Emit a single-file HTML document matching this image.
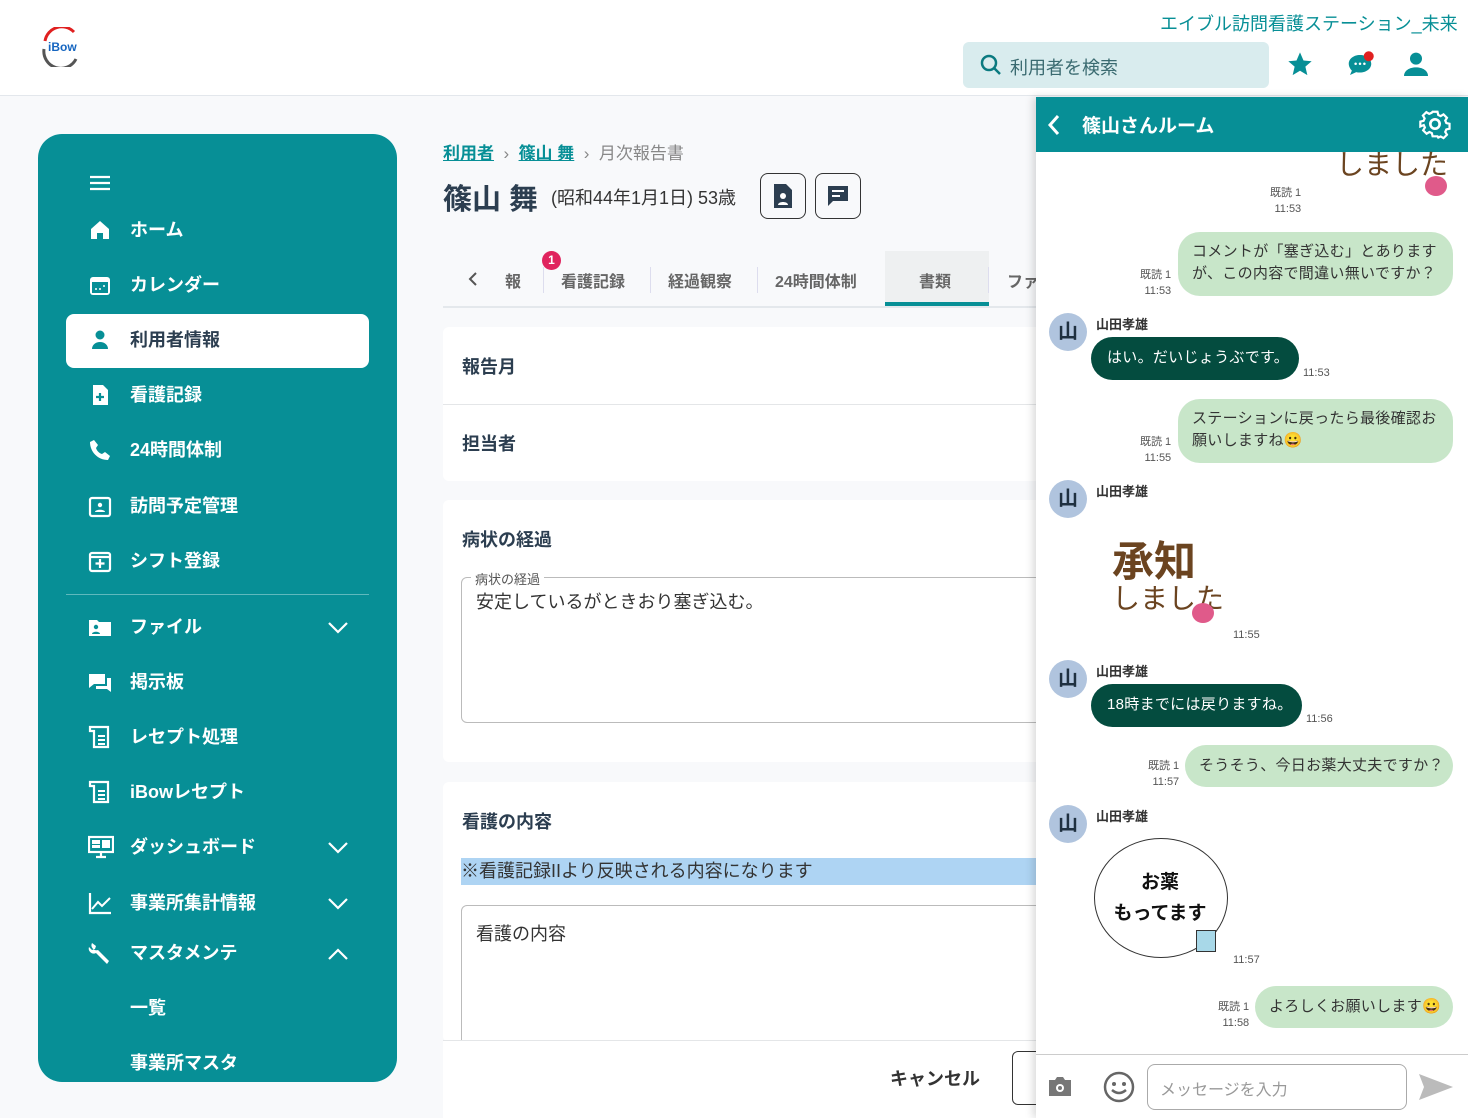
<!DOCTYPE html>
<html><head><meta charset="utf-8">
<style>
*{margin:0;padding:0;box-sizing:border-box}
body{width:1468px;height:1118px;overflow:hidden;background:#f8f9fb;font-family:"Liberation Sans","Noto Sans CJK JP",sans-serif;position:relative;color:#2c3e50}
.a{position:absolute}
.hdr{left:0;top:0;width:1468px;height:96px;background:#fff;border-bottom:1px solid #e3e7ec}
.side{left:38px;top:134px;width:359px;height:948px;background:#078f96;border-radius:24px}
.it{position:absolute;left:92px;color:#fff;font-weight:bold;font-size:18px;height:30px;line-height:30px}
.it span{position:absolute;left:38px;white-space:nowrap}
.ic{position:absolute;left:-4px;top:3px;width:24px;height:24px}
.chev{position:absolute;left:236px;top:10px}
.card{background:#fff;left:443px;width:593px}
.lbl{font-weight:bold;font-size:18px;color:#2c3e50}
.chat{left:1036px;top:97px;width:432px;height:1021px;background:#fff;box-shadow:-3px 0 8px rgba(0,0,0,.15)}
.bg{background:#c8e6c9;color:#333;font-size:15px;line-height:22px;border-radius:22px;padding:0 14px;white-space:nowrap;letter-spacing:.3px}
.bd{background:#044c3f;color:#fff;font-size:15px;border-radius:22px;padding:0 16px;line-height:42px;white-space:nowrap;letter-spacing:.3px}
.tm{font-size:11px;color:#555;text-align:right;line-height:16px;white-space:nowrap}
.av{width:38px;height:38px;border-radius:50%;background:#b0c4de;color:#1f3040;font-weight:bold;font-size:20px;text-align:center;line-height:38px}
.nm{font-size:13px;font-weight:bold;color:#333}
.tab{font-size:16px;font-weight:bold;color:#666;top:268px}
</style></head><body>
<div class="a hdr"></div>
<svg class="a" style="left:40px;top:27px" width="42" height="40" viewBox="0 0 42 40"><path d="M5 14 A17 17 0 0 1 34 5" stroke="#e02020" stroke-width="3" fill="none"/><path d="M4 22 A17 17 0 0 0 36 32" stroke="#555" stroke-width="3" fill="none"/><text x="8" y="24" font-size="12" font-weight="bold" fill="#1565c0" font-family="Liberation Sans">iBow</text></svg>
<div class="a" style="left:1160px;top:10px;font-size:18px;color:#078f96;white-space:nowrap">エイブル訪問看護ステーション_未来</div>
<div class="a" style="left:963px;top:42px;width:306px;height:46px;background:#d9ecee;border-radius:6px"></div>
<svg class="a" style="left:980px;top:54px" width="22" height="22" viewBox="0 0 22 22"><circle cx="9" cy="9" r="7" stroke="#0a7a80" stroke-width="2.5" fill="none"/><path d="M14 14l6 6" stroke="#0a7a80" stroke-width="2.5"/></svg>
<div class="a" style="left:1010px;top:54px;font-size:18px;color:#3a6a70">利用者を検索</div>
<svg class="a" style="left:1285px;top:50px" width="30" height="28" viewBox="0 0 24 24"><path d="M12 2l3 7 7 .6-5.4 4.7 1.7 7.2L12 17.8 5.7 21.5l1.7-7.2L2 9.6 9 9z" fill="#078f96"/></svg>
<svg class="a" style="left:1345px;top:50px" width="30" height="30" viewBox="0 0 24 24"><path d="M3 11c0-4 4-7 9-7s9 3 9 7-4 7-9 7c-1 0-2 0-3-.3L4 20l1.5-3.5C4 15 3 13 3 11z" fill="#078f96"/><circle cx="8.5" cy="11" r="1" fill="#fff"/><circle cx="12" cy="11" r="1" fill="#fff"/><circle cx="15.5" cy="11" r="1" fill="#fff"/><circle cx="19" cy="5" r="4" fill="#e02020"/></svg>
<svg class="a" style="left:1400px;top:48px" width="32" height="32" viewBox="0 0 24 24"><circle cx="12" cy="8" r="4.5" fill="#078f96"/><path d="M3 21c0-4 4-6.5 9-6.5s9 2.5 9 6.5z" fill="#078f96"/></svg>

<div class="a side"></div>
<svg class="a" style="left:90px;top:175px" width="20" height="16"><path d="M0 2h20M0 8h20M0 14h20" stroke="#fff" stroke-width="2.2"/></svg>
<div class="a" style="left:66px;top:314px;width:303px;height:54px;background:#fff;border-radius:8px"></div>
<div class="it" style="top:215px"><svg class="ic" viewBox="0 0 24 24"><path d="M12 3l9 8v10h-6v-6h-6v6H3V11z" fill="#fff"/></svg><span>ホーム</span></div>
<div class="it" style="top:270px"><svg class="ic" viewBox="0 0 24 24"><rect x="2" y="4" width="20" height="18" rx="3" fill="#fff"/><rect x="4" y="9" width="16" height="11" fill="#078f96"/><circle cx="8" cy="16" r="1" fill="#fff"/><circle cx="12" cy="16" r="1" fill="#fff"/><circle cx="16" cy="13" r="1" fill="#fff"/></svg><span>カレンダー</span></div>
<div class="it" style="top:325px;color:#2c3e50"><svg class="ic" viewBox="0 0 24 24"><circle cx="12" cy="7" r="4.5" fill="#078f96"/><path d="M4 21c0-4 3.5-7 8-7s8 3 8 7z" fill="#078f96"/></svg><span>利用者情報</span></div>
<div class="it" style="top:380px"><svg class="ic" viewBox="0 0 24 24"><path d="M5 2h10l5 5v15H5z" fill="#fff"/><path d="M12 10v8M8 14h8" stroke="#078f96" stroke-width="2.2"/></svg><span>看護記録</span></div>
<div class="it" style="top:435px"><svg class="ic" viewBox="0 0 24 24"><path d="M6 2l4 5-2 3c1 3 3 5 6 6l3-2 5 4-2 4C10 22 2 14 2 4z" fill="#fff"/></svg><span>24時間体制</span></div>
<div class="it" style="top:491px"><svg class="ic" viewBox="0 0 24 24"><rect x="2" y="4" width="20" height="18" rx="2" fill="none" stroke="#fff" stroke-width="2.2"/><circle cx="12" cy="11" r="2.2" fill="#fff"/><path d="M7 18c0-3 10-3 10 0z" fill="#fff"/></svg><span>訪問予定管理</span></div>
<div class="it" style="top:546px"><svg class="ic" viewBox="0 0 24 24"><rect x="2" y="4" width="20" height="18" rx="2" fill="none" stroke="#fff" stroke-width="2.2"/><path d="M12 10v9M7.5 14.5h9M2 8h20" stroke="#fff" stroke-width="2.2"/></svg><span>シフト登録</span></div>
<div class="a" style="left:66px;top:594px;width:303px;height:1px;background:#5fb9bd"></div>
<div class="it" style="top:612px"><svg class="ic" viewBox="0 0 24 24"><path d="M1 5h8l2 2h12v14H1z" fill="#fff"/><circle cx="8" cy="12" r="2.2" fill="#078f96"/><path d="M4 19c0-3 8-3 8 0z" fill="#078f96"/></svg><span>ファイル</span><svg class="chev" width="20" height="12"><path d="M1 1l9 9 9-9" stroke="#fff" stroke-width="2.2" fill="none"/></svg></div>
<div class="it" style="top:667px"><svg class="ic" viewBox="0 0 24 24"><path d="M1 4h16v10H6l-5 4z" fill="#fff"/><path d="M19 8h4v14l-4-3H8v-3h11z" fill="#fff"/></svg><span>掲示板</span></div>
<div class="it" style="top:722px"><svg class="ic" viewBox="0 0 24 24"><path d="M2 2h18v20H6V6H2z" fill="none" stroke="#fff" stroke-width="2.2"/><path d="M10 11h7M10 15h7M10 19h7" stroke="#fff" stroke-width="2"/></svg><span>レセプト処理</span></div>
<div class="it" style="top:777px"><svg class="ic" viewBox="0 0 24 24"><path d="M2 2h18v20H6V6H2z" fill="none" stroke="#fff" stroke-width="2.2"/><path d="M10 11h7M10 15h7M10 19h7" stroke="#fff" stroke-width="2"/></svg><span>iBowレセプト</span></div>
<div class="it" style="top:832px"><svg class="ic" viewBox="0 0 26 24" style="width:26px"><rect x="1" y="2" width="24" height="15" fill="none" stroke="#fff" stroke-width="2.2"/><rect x="4" y="5" width="8" height="4" fill="#fff"/><rect x="14" y="5" width="8" height="8" fill="#fff"/><rect x="4" y="10" width="8" height="3" fill="#fff"/><path d="M13 17v4M8 22h10" stroke="#fff" stroke-width="2.2"/></svg><span>ダッシュボード</span><svg class="chev" width="20" height="12"><path d="M1 1l9 9 9-9" stroke="#fff" stroke-width="2.2" fill="none"/></svg></div>
<div class="it" style="top:888px"><svg class="ic" viewBox="0 0 24 24"><path d="M2 2v20h21" stroke="#fff" stroke-width="2.2" fill="none"/><path d="M4 18l6-7 4 4 8-8" stroke="#fff" stroke-width="2" fill="none"/></svg><span>事業所集計情報</span><svg class="chev" width="20" height="12"><path d="M1 1l9 9 9-9" stroke="#fff" stroke-width="2.2" fill="none"/></svg></div>
<div class="it" style="top:938px"><svg class="ic" viewBox="0 0 24 24"><path d="M4 2a5 5 0 0 0 6 7l11 11-2 3L8 12a5 5 0 0 1-7-6l3 3 3-1 1-3z" fill="#fff"/></svg><span>マスタメンテ</span><svg class="chev" width="20" height="12"><path d="M1 11l9-9 9 9" stroke="#fff" stroke-width="2.2" fill="none"/></svg></div>
<div class="it" style="top:993px"><span>一覧</span></div>
<div class="it" style="top:1048px"><span>事業所マスタ</span></div>

<div class="a" style="left:443px;top:139px;font-size:17px;color:#888;white-space:nowrap"><span style="color:#078f96;font-weight:bold;text-decoration:underline">利用者</span>&nbsp; ›&nbsp; <span style="color:#078f96;font-weight:bold;text-decoration:underline">篠山 舞</span>&nbsp; ›&nbsp; 月次報告書</div>
<div class="a" style="left:443px;top:176px;font-size:29px;font-weight:bold;color:#2c3e50">篠山 舞</div>
<div class="a" style="left:551px;top:184px;font-size:18px;color:#333">(昭和44年1月1日) 53歳</div>
<div class="a" style="left:760px;top:173px;width:46px;height:46px;border:1.5px solid #333;border-radius:8px"></div>
<svg class="a" style="left:772px;top:183px" width="22" height="26" viewBox="0 0 22 26"><path d="M2 1h12l6 6v18H2z" fill="#2c3e50"/><circle cx="11" cy="13" r="3" fill="#fff"/><path d="M6 22c0-4 10-4 10 0z" fill="#fff"/></svg>
<div class="a" style="left:815px;top:173px;width:46px;height:46px;border:1.5px solid #333;border-radius:8px"></div>
<svg class="a" style="left:826px;top:184px" width="24" height="24" viewBox="0 0 24 24"><path d="M2 2h20v15H7l-5 5z" fill="#2c3e50"/><path d="M6 7h12M6 12h8" stroke="#fff" stroke-width="2"/></svg>
<div class="a" style="left:443px;top:306px;width:593px;height:2px;background:#e4e8ec"></div>
<div class="a" style="left:885px;top:251px;width:104px;height:55px;background:#eef0f1"></div>
<div class="a" style="left:885px;top:302px;width:104px;height:4px;background:#078f96"></div>
<svg class="a" style="left:467px;top:271px" width="12" height="16"><path d="M9 2L3 8l6 6" stroke="#555" stroke-width="2" fill="none"/></svg>
<div class="a tab" style="left:505px">報</div>
<div class="a tab" style="left:561px">看護記録</div>
<div class="a tab" style="left:668px">経過観察</div>
<div class="a tab" style="left:775px">24時間体制</div>
<div class="a tab" style="left:919px">書類</div>
<div class="a tab" style="left:1007px">ファ</div>
<div class="a" style="left:543px;top:267px;width:1px;height:26px;background:#dde"></div>
<div class="a" style="left:650px;top:267px;width:1px;height:26px;background:#dde"></div>
<div class="a" style="left:757px;top:267px;width:1px;height:26px;background:#dde"></div>
<div class="a" style="left:988px;top:267px;width:1px;height:26px;background:#dde"></div>
<div class="a" style="left:542px;top:251px;width:19px;height:19px;border-radius:50%;background:#e0245e;color:#fff;font-size:12px;font-weight:bold;text-align:center;line-height:19px">1</div>
<div class="a card" style="top:327px;height:154px;border-radius:6px 0 0 6px"></div>
<div class="a" style="left:443px;top:404px;width:593px;height:1px;background:#e4e6e8"></div>
<div class="a lbl" style="left:462px;top:353px">報告月</div>
<div class="a lbl" style="left:462px;top:430px">担当者</div>
<div class="a card" style="top:500px;height:262px;border-radius:6px 0 0 6px"></div>
<div class="a lbl" style="left:462px;top:526px">病状の経過</div>
<div class="a" style="left:461px;top:577px;width:600px;height:146px;border:1px solid #bbb;border-radius:6px"></div>
<div class="a" style="left:471px;top:569px;background:#fff;padding:0 4px;font-size:13px;color:#555">病状の経過</div>
<div class="a" style="left:476px;top:588px;font-size:18px;color:#333">安定しているがときおり塞ぎ込む。</div>
<div class="a card" style="top:782px;height:260px;border-radius:6px 0 0 6px"></div>
<div class="a lbl" style="left:462px;top:808px">看護の内容</div>
<div class="a" style="left:461px;top:858px;width:580px;height:27px;background:#aed4f3;font-size:18px;color:#333;line-height:27px">※看護記録IIより反映される内容になります</div>
<div class="a" style="left:461px;top:905px;width:600px;height:160px;border:1px solid #bbb;border-radius:6px"></div>
<div class="a" style="left:476px;top:920px;font-size:18px;color:#333">看護の内容</div>
<div class="a" style="left:443px;top:1040px;width:600px;height:78px;background:#fff;border-top:1px solid #e4e6e8"></div>
<div class="a" style="left:890px;top:1065px;font-size:18px;font-weight:bold;color:#333">キャンセル</div>
<div class="a" style="left:1012px;top:1051px;width:40px;height:54px;border:1.5px solid #333;border-radius:6px"></div>

<div class="a chat"></div>
<div class="a" style="left:1036px;top:97px;width:432px;height:55px;background:#078f96"></div>
<svg class="a" style="left:1047px;top:114px" width="14" height="22"><path d="M11 2L3 11l8 9" stroke="#fff" stroke-width="3" fill="none"/></svg>
<div class="a" style="left:1082px;top:111px;font-size:19px;font-weight:bold;color:#fff">篠山さんルーム</div>
<svg class="a" style="left:1419px;top:108px" width="32" height="32" viewBox="0 0 24 24"><path d="M10 2h4l.6 2.6 2 .9 2.3-1.4 2.8 2.8-1.4 2.3.9 2 2.6.6v4l-2.6.6-.9 2 1.4 2.3-2.8 2.8-2.3-1.4-2 .9L14 22h-4l-.6-2.6-2-.9-2.3 1.4-2.8-2.8 1.4-2.3-.9-2L0 14v-4l2.6-.6.9-2-1.4-2.3 2.8-2.8 2.3 1.4 2-.9z" fill="none" stroke="#fff" stroke-width="1.8" transform="translate(1 1) scale(.92)"/><circle cx="12" cy="12" r="3.5" fill="none" stroke="#fff" stroke-width="2"/></svg>
<div class="a" style="left:1336px;top:143px;font-size:28px;color:#6b4420;white-space:nowrap">しました</div>
<div class="a" style="left:1425px;top:176px;width:22px;height:20px;border-radius:50%;background:#e05a8a"></div>
<div class="a tm" style="left:1270px;top:185px">既読 1<br>11:53</div>
<div class="a bg" style="left:1178px;top:232px;width:275px;height:64px;padding-top:9px">コメントが「塞ぎ込む」とあります<br>が、この内容で間違い無いですか？</div>
<div class="a tm" style="left:1140px;top:267px">既読 1<br>11:53</div>
<div class="a av" style="left:1049px;top:313px">山</div>
<div class="a nm" style="left:1096px;top:314px">山田孝雄</div>
<div class="a bd" style="left:1091px;top:337px;height:43px;width:208px">はい。だいじょうぶです。</div>
<div class="a tm" style="left:1303px;top:365px">11:53</div>
<div class="a bg" style="left:1178px;top:399px;width:275px;height:64px;padding-top:9px">ステーションに戻ったら最後確認お<br>願いしますね😀</div>
<div class="a tm" style="left:1140px;top:434px">既読 1<br>11:55</div>
<div class="a av" style="left:1049px;top:480px">山</div>
<div class="a nm" style="left:1096px;top:481px">山田孝雄</div>
<div class="a" style="left:1112px;top:528px;font-size:42px;font-weight:bold;color:#6b4420">承知</div>
<div class="a" style="left:1112px;top:577px;font-size:28px;color:#6b4420;white-space:nowrap">しました</div>
<div class="a" style="left:1192px;top:603px;width:22px;height:20px;border-radius:50%;background:#e05a8a"></div>
<div class="a tm" style="left:1233px;top:627px">11:55</div>
<div class="a av" style="left:1049px;top:660px">山</div>
<div class="a nm" style="left:1096px;top:661px">山田孝雄</div>
<div class="a bd" style="left:1091px;top:684px;height:43px;width:211px">18時までには戻りますね。</div>
<div class="a tm" style="left:1306px;top:711px">11:56</div>
<div class="a bg" style="left:1185px;top:745px;width:268px;height:42px;line-height:42px">そうそう、今日お薬大丈夫ですか？</div>
<div class="a tm" style="left:1148px;top:758px">既読 1<br>11:57</div>
<div class="a av" style="left:1049px;top:805px">山</div>
<div class="a nm" style="left:1096px;top:806px">山田孝雄</div>
<div class="a" style="left:1094px;top:838px;width:134px;height:120px;border:1.5px solid #333;border-radius:50%"></div>
<div class="a" style="left:1105px;top:867px;font-size:19px;font-weight:bold;color:#111;text-align:center;width:110px;line-height:31px;white-space:nowrap">お薬<br>もってます</div>
<div class="a" style="left:1196px;top:930px;width:20px;height:22px;background:#a8d8e8;border:1px solid #333"></div>
<div class="a tm" style="left:1233px;top:952px">11:57</div>
<div class="a bg" style="left:1255px;top:986px;width:198px;height:42px;line-height:42px">よろしくお願いします😀</div>
<div class="a tm" style="left:1218px;top:999px">既読 1<br>11:58</div>
<div class="a" style="left:1036px;top:1054px;width:432px;height:1px;background:#ccc"></div>
<svg class="a" style="left:1047px;top:1075px" width="26" height="22" viewBox="0 0 26 22"><path d="M2 5h6l2-3h6l2 3h6v16H2z" fill="#777"/><circle cx="13" cy="13" r="4" fill="#fff"/><circle cx="13" cy="13" r="2" fill="#777"/></svg>
<svg class="a" style="left:1103px;top:1071px" width="32" height="32" viewBox="0 0 32 32"><circle cx="16" cy="16" r="14" fill="none" stroke="#666" stroke-width="2.5"/><circle cx="11" cy="13" r="2" fill="#666"/><circle cx="21" cy="13" r="2" fill="#666"/><path d="M9 19q7 6 14 0" stroke="#666" stroke-width="2.5" fill="none"/></svg>
<div class="a" style="left:1147px;top:1064px;width:260px;height:46px;border:1px solid #aaa;border-radius:8px"></div>
<div class="a" style="left:1160px;top:1076px;font-size:16px;color:#999">メッセージを入力</div>
<svg class="a" style="left:1418px;top:1073px" width="36" height="28" viewBox="0 0 36 28"><path d="M1 1l34 13L1 27l5-13z" fill="#bbb"/></svg>
</body></html>
